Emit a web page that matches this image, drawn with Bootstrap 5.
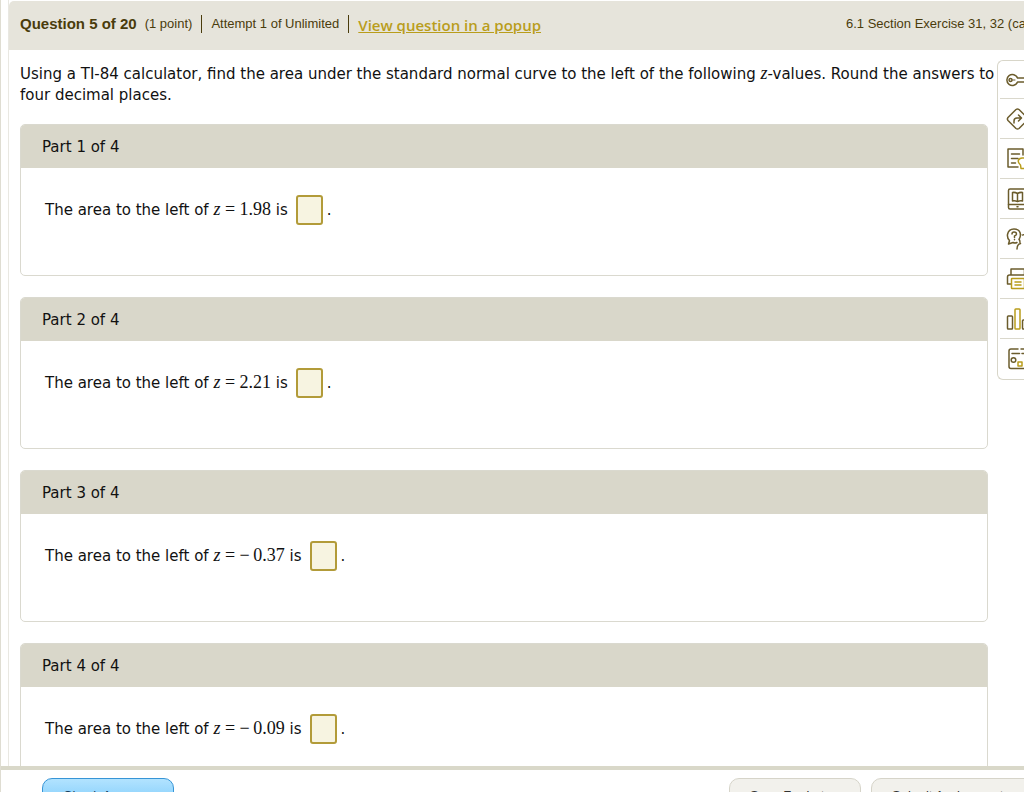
<!DOCTYPE html>
<html lang="en">
<head>
<meta charset="utf-8">
<meta name="viewport" content="width=device-width, initial-scale=1">
<title>Question 5 of 20</title>
<link rel="stylesheet" href="https://cdn.jsdelivr.net/npm/bootstrap@5.3.0/dist/css/bootstrap.min.css">
<style>
body{font-family:"DejaVu Sans",Verdana,sans-serif;font-size:15px;line-height:21px;color:#111;border-left:1px solid #dfddd2}
.sheet{margin-left:7px;border-left:1px solid #e9e8e2;min-height:0}
.q-head{height:49px;margin-top:1px;padding:0 0 4px 11px;background:#e6e4db;border-top-left-radius:5px;font-family:"Liberation Sans",Arial,sans-serif;font-size:13px;color:#4a3c0c;white-space:nowrap}
.q-head h1{font-size:15px;font-weight:700;line-height:21px}
.q-rule{width:1px;height:18px;background:#4a3c0c;margin:0 9px}
.q-link{font-family:"Open Sans",sans-serif;font-size:15px;font-weight:600;color:#b99d1b}
.q-name{width:178px}
.q-body{padding:14px 9px 0 11px;min-width:0}
.q-text{margin:0 -8px 18px 0}
.part{border:1px solid #dad9cf;border-radius:5px;margin-bottom:21px;height:152px}
.part-title{background:#d9d7ca;border:0;border-radius:4px 4px 0 0!important;padding:12px 21px 10px;height:43px;font-size:15px;line-height:21px}
.part-text{padding:26px 24px;line-height:30px}
.mth{font-family:"Liberation Serif","Times New Roman",serif;font-size:18px}
.q-text i{font-family:"Liberation Serif","Times New Roman",serif;font-size:18px;line-height:1}
.answer{width:27px;height:30px;border:2px solid #b29b39;border-radius:3px;background:#f7f4e1;padding:2px}
.answer:focus{outline:2px solid #dccb78}
.rail{width:27px;height:320px;margin-top:10px;border:1px solid #d8d6c9;border-right:0;border-radius:6px 0 0 6px;padding-left:2px}
.tool{width:40px;height:40px;padding:0 0 0 6px;border:0;border-bottom:1px solid #dad8cc;background:none;text-align:left;flex:none}
.tool:first-child{height:38px}
.tool:last-child{border:0}
.tool svg{width:24px;height:24px;fill:none;stroke:#6b5c2c;stroke-width:1.5;stroke-linejoin:round;stroke-linecap:round;display:block}
.tool .au{stroke:#b99d1b}
.foot{height:26px;border-top:4px solid #d9d8c9;padding:8px 0 0 41px}
.act{height:36px;border:1px solid #d6d4c9;border-radius:10px;background:#f2f1ec;color:#333;font-family:"Liberation Sans",Arial,sans-serif;font-size:13px;line-height:20px;padding:7px 20px;text-align:left;white-space:nowrap;width:132px;flex:none}
.act-main{background:linear-gradient(#b2e3ff,#70c5fa);border-color:#3795d6;color:#17405c}
.act-wide{width:180px}
.foot-end{width:295px;gap:10px}
</style>
</head>
<body class="vh-100 d-flex flex-column overflow-hidden">
<main class="sheet flex-grow-1 overflow-hidden">
  <header class="q-head d-flex align-items-center">
    <h1 class="m-0">Question 5 of 20</h1><span class="ms-2">(1 point)</span>
    <span class="q-rule"></span><span>Attempt 1 of Unlimited</span>
    <span class="q-rule"></span><a class="q-link pt-1" href="#popup">View question in a popup</a>
    <span class="q-name ms-auto overflow-hidden">6.1 Section Exercise 31, 32 (calculator)</span>
  </header>
  <div class="d-flex align-items-start">
    <div class="q-body flex-grow-1">
      <p class="q-text">Using a TI-84 calculator, find the area under the standard normal curve to the left of the following <i>z</i>-values. Round the answers to four decimal places.</p>
      <section class="card part"><h2 class="card-header part-title m-0">Part 1 of 4</h2>
        <div class="part-text d-flex align-items-center"><label for="a1">The area to the left of <span class="mth"><i>z</i> = 1.98</span> is</label><input id="a1" class="answer ms-2 me-1" type="text">.</div></section>
      <section class="card part"><h2 class="card-header part-title m-0">Part 2 of 4</h2>
        <div class="part-text d-flex align-items-center"><label for="a2">The area to the left of <span class="mth"><i>z</i> = 2.21</span> is</label><input id="a2" class="answer ms-2 me-1" type="text">.</div></section>
      <section class="card part"><h2 class="card-header part-title m-0">Part 3 of 4</h2>
        <div class="part-text d-flex align-items-center"><label for="a3">The area to the left of <span class="mth"><i>z</i> = −&thinsp;0.37</span> is</label><input id="a3" class="answer ms-2 me-1" type="text">.</div></section>
      <section class="card part"><h2 class="card-header part-title m-0">Part 4 of 4</h2>
        <div class="part-text d-flex align-items-center"><label for="a4">The area to the left of <span class="mth"><i>z</i> = −&thinsp;0.09</span> is</label><input id="a4" class="answer ms-2 me-1" type="text">.</div></section>
    </div>
    <nav class="rail d-flex flex-column flex-shrink-0 overflow-hidden" aria-label="Question tools">
      <button class="tool" type="button" aria-label="Answer key"><svg viewBox="0 0 24 24"><path d="M11.500 10A5.500 5.500 0 1 0 11.500 14H24M11.500 10H24"/><circle cx="4.500" cy="12" r="1.500"/><path d="M6.500 12H9" stroke-width="1"/></svg></button>
      <button class="tool" type="button" aria-label="Guided solution"><svg viewBox="0 0 24 24"><path d="M10 2.500 2 10.500Q.8 12 2 13.500L10 21.500Q11.500 22.500 13 21.500L21 13.500Q22 12 21 10.500L13 2.500Q11.500 1.500 10 2.500Z"/><path d="M8 16V14Q8 11 11 11H15M12.500 8 15.500 11 12.500 14"/></svg></button>
      <button class="tool" type="button" aria-label="Hints"><svg viewBox="0 0 24 24"><path d="M17 8V2H2V20H12"/><path d="M5.500 7H13.500M5.500 11.500H12M5.500 16H9.500"/><path class="au" d="M14.500 18Q11.500 15.500 12.500 13Q14 10.500 17 11Q21 11 21 15Q21 16 19 18V21.500H15Z"/></svg></button>
      <button class="tool" type="button" aria-label="E-book"><svg viewBox="0 0 24 24"><rect x="2.500" y="2" width="18" height="20" rx="1.500"/><path d="M2.500 17.500H20.500M11.500 6.500V14.500M11.500 6.500Q9 5 6.500 5.500V14Q9 13.500 11.500 14.500Q14 13.500 16.500 14V5.500Q14 5 11.500 6.500M11 19.800H12"/></svg></button>
      <button class="tool" type="button" aria-label="Ask for help"><svg viewBox="0 0 24 24"><path d="M11 15.500Q9 16.500 7 15.500L2.500 17 3.500 13.500Q1 11 1.500 7.500Q2.500 2 8 2Q14 2 14.500 7.500"/><path d="M6 7Q6 5 8 5Q10.500 5 10.500 7Q10.500 8.300 8.500 9V10.500M8.500 12.500V12.700"/><path d="M14.500 7.500Q14.500 10 13 12.500Q14 13 14 15.500M11 22Q11 17.500 14.500 16.500M16.500 8Q18 7 20 9"/></svg></button>
      <button class="tool" type="button" aria-label="Print"><svg viewBox="0 0 24 24"><path d="M5 8V2H18.500V8M4.500 17H1.500V10Q1.500 8 3.500 8H20Q22 8 22 10V17H20"/><rect class="au" x="5.500" y="11.500" width="13" height="10" rx=".5"/><path class="au" d="M9 15H15M9 18H15"/></svg></button>
      <button class="tool" type="button" aria-label="Statistics"><svg viewBox="0 0 24 24"><rect x="1.500" y="9" width="5" height="13" rx=".8"/><rect class="au" x="9" y="2" width="5" height="20" rx=".8"/><rect x="16.500" y="13" width="5" height="9" rx=".8"/></svg></button>
      <button class="tool" type="button" aria-label="Formulas"><svg viewBox="0 0 24 24"><path d="M12 2H5Q3 2 3 4V19.500Q3 21.500 5 21.500H20M15 2H20M6 6.500H13.500M16 6.500H20"/><circle cx="7.500" cy="13" r="2.300"/><rect class="au" x="12" y="15" width="4" height="4"/></svg></button>
    </nav>
  </div>
</main>
<footer class="foot d-flex align-items-start flex-shrink-0 overflow-hidden">
  <button class="act act-main" type="button">Check Answer</button>
  <div class="foot-end d-flex ms-auto overflow-hidden">
    <button class="act" type="button">Save For Later</button>
    <button class="act act-wide" type="button">Submit Assignment</button>
  </div>
</footer>
<script src="https://cdn.jsdelivr.net/npm/bootstrap@5.3.0/dist/js/bootstrap.bundle.min.js"></script>
</body>
</html>
